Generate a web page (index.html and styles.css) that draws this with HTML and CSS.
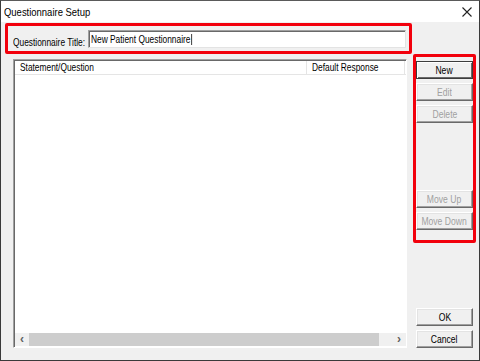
FILE: index.html
```html
<!DOCTYPE html>
<html>
<head>
<meta charset="utf-8">
<link rel="stylesheet" href="styles.css">
</head>
<body>
<div class="window">
  <div class="titlebar">
    <span class="title">Questionnaire Setup</span>
    <svg class="close" width="10" height="10" viewBox="0 0 10 10"><path d="M0.5 0.5 L9.5 9.5 M9.5 0.5 L0.5 9.5" stroke="#222" stroke-width="1.1" fill="none"/></svg>
  </div>
  <div class="content">
    <div class="left">
      <div class="titlebox">
        <span class="label"><span class="sx">Questionnaire Title:</span></span>
        <div class="input"><span class="sx">New Patient Questionnaire<span class="caret"></span></span></div>
      </div>
      <div class="list">
        <div class="header">
          <div class="col col1"><span class="sx">Statement/Question</span></div>
          <div class="col col2"><span class="sx">Default Response</span></div>
        </div>
        <div class="rows"></div>
        <div class="hscroll">
          <div class="arrow">&#8249;</div>
          <div class="track"><div class="thumb"></div></div>
          <div class="arrow">&#8250;</div>
        </div>
      </div>
    </div>
    <div class="right">
      <div class="btnbox">
        <button class="btn default"><span class="bx">New</span></button>
        <button class="btn disabled"><span class="bx">Edit</span></button>
        <button class="btn disabled"><span class="bx">Delete</span></button>
        <div class="spacer"></div>
        <button class="btn disabled"><span class="bx">Move Up</span></button>
        <button class="btn disabled"><span class="bx">Move Down</span></button>
      </div>
      <div class="grow"></div>
      <button class="btn ok"><span class="bx">OK</span></button>
      <button class="btn ok"><span class="bx">Cancel</span></button>
    </div>
  </div>
</div>
</body>
</html>
```
FILE: styles.css
```css
* { box-sizing: border-box; }
html, body { margin: 0; padding: 0; }
body { width: 480px; height: 361px; overflow: hidden; background: #f0f0f0;
  font-family: "Liberation Sans", Arial, sans-serif; font-size: 11px; color: #000; }
.window { width: 480px; height: 361px; border: 1px solid #3a3a3a; border-top: 1px solid #5a5a5a;
  display: flex; flex-direction: column; background: #f0f0f0; }
.titlebar { height: 21px; background: #fff; display: flex; align-items: center; justify-content: space-between;
  padding: 0 7px 0 3px; }
.title { display: inline-block; font-size: 11px; transform: scaleX(0.86); transform-origin: left center; white-space: nowrap; color: #000; }
.close { margin-top: 1px; }
.sx { display: inline-block; transform: scaleX(0.76); transform-origin: left center; white-space: nowrap; }
.bx { display: inline-block; transform: scaleX(0.78); transform-origin: center center; white-space: nowrap; margin: 0 -12px; }
.content { flex: 1; display: flex; padding: 1px 3px 12px 4px; }
.left { width: 407px; display: flex; flex-direction: column; }
.titlebox { height: 31px; border: 3px solid #f2000c; border-radius: 2px; display: flex; align-items: flex-end;
  padding: 0 3px 3px 5px; }
.label { width: 75px; line-height: 12px; white-space: nowrap; }
.input { flex: 1; height: 18px; background: #fff; border: 1px solid #a0a0a0; border-right-color: #e3e3e3; border-bottom-color: #e3e3e3;
  box-shadow: inset 1px 1px 0 #696969; padding: 2px 0 0 2px; line-height: 13px; white-space: nowrap; }
.caret { display: inline-block; width: 1px; height: 11px; background: #000; vertical-align: -2px; margin-left: 1px; }
.list { margin: 5px 0 0 8px; width: 394px; flex: 1; background: #fff; border: 1px solid #a0a0a0;
  border-right-color: #fff; border-bottom-color: #fff; box-shadow: inset 1px 1px 0 #696969; padding: 1px 0 1px 1px;
  display: flex; flex-direction: column; }
.header { height: 14px; display: flex; background: #fff; border-bottom: 1px solid #e5e5e5; }
.col { line-height: 13px; padding-left: 5px; white-space: nowrap; border-right: 1px solid #e5e5e5; overflow: hidden; }
.col1 { width: 292px; }
.col2 { width: 98px; }
.rows { flex: 1; }
.hscroll { height: 13px; display: flex; background: #f0f0f0; }
.arrow { width: 14px; text-align: center; line-height: 12px; font-size: 12px; color: #606060; font-weight: bold; }
.track { flex: 1; }
.thumb { width: 350px; height: 13px; background: #cdcdcd; }
.right { width: 63px; margin-left: 1px; display: flex; flex-direction: column; }
.btnbox { margin-top: 31px; height: 189px; border: 3px solid #f2000c; border-radius: 2px; display: flex; flex-direction: column;
  padding: 4px 0 10px 0; }
.btn { width: 57px; height: 18px; margin: 0 0 4px 0; padding: 0; font-family: inherit; font-size: 11px; color: #000;
  background: #f0f0f0; border: 1px solid; border-color: #fff #696969 #696969 #fff; box-shadow: inset -1px -1px 0 #a0a0a0, inset 1px 1px 0 #e3e3e3;
  overflow: visible; white-space: nowrap; flex-shrink: 0; }
.btn.default { border: 1px solid #3c3c3c; box-shadow: inset 1px 1px 0 #fff, inset -1px -1px 0 #696969; }
.btn.disabled { color: #a0a0a0; }
.spacer { flex: 1; }
.btnbox .btn:last-child { margin-bottom: 0; }
.grow { flex: 1; }
.ok { margin-left: 3px; margin-bottom: 4px; }
.ok:last-child { margin-bottom: 0; }
```
